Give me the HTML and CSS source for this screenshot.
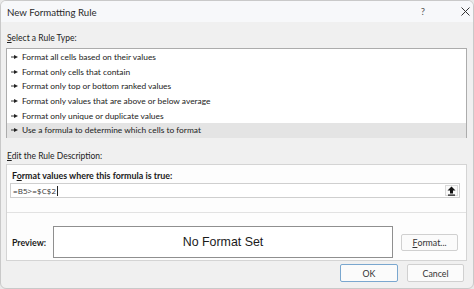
FILE: index.html
```html
<!DOCTYPE html>
<html>
<head>
<meta charset="utf-8">
<link rel="stylesheet" href="styles.css">
</head>
<body>
<div class="window">
  <div class="titlebar">
    <span class="title">New Formatting Rule</span>
    <span class="help">?</span>
    <span class="close">
      <svg width="9" height="9" viewBox="0 0 9 9"><path d="M0.5 0.5L8.5 8.5M8.5 0.5L0.5 8.5" stroke="#333" stroke-width="1" fill="none"/></svg>
    </span>
  </div>
  <div class="body">
    <div class="label"><u>S</u>elect a Rule Type:</div>
    <ul class="list">
      <li><svg class="arr" width="7" height="4" viewBox="0 0 7 4"><path d="M0 2H3.5" stroke="#222" stroke-width="0.9"/><path d="M3 0L7 2L3 4Z" fill="#222"/></svg>Format all cells based on their values</li>
      <li><svg class="arr" width="7" height="4" viewBox="0 0 7 4"><path d="M0 2H3.5" stroke="#222" stroke-width="0.9"/><path d="M3 0L7 2L3 4Z" fill="#222"/></svg>Format only cells that contain</li>
      <li><svg class="arr" width="7" height="4" viewBox="0 0 7 4"><path d="M0 2H3.5" stroke="#222" stroke-width="0.9"/><path d="M3 0L7 2L3 4Z" fill="#222"/></svg>Format only top or bottom ranked values</li>
      <li><svg class="arr" width="7" height="4" viewBox="0 0 7 4"><path d="M0 2H3.5" stroke="#222" stroke-width="0.9"/><path d="M3 0L7 2L3 4Z" fill="#222"/></svg>Format only values that are above or below average</li>
      <li><svg class="arr" width="7" height="4" viewBox="0 0 7 4"><path d="M0 2H3.5" stroke="#222" stroke-width="0.9"/><path d="M3 0L7 2L3 4Z" fill="#222"/></svg>Format only unique or duplicate values</li>
      <li class="selected"><svg class="arr" width="7" height="4" viewBox="0 0 7 4"><path d="M0 2H3.5" stroke="#222" stroke-width="0.9"/><path d="M3 0L7 2L3 4Z" fill="#222"/></svg>Use a formula to determine which cells to format</li>
    </ul>
    <div class="label label-edit"><u>E</u>dit the Rule Description:</div>
    <div class="desc">
      <div class="desc-title">F<u>o</u>rmat values where this formula is true:</div>
      <div class="formula">
        <span class="ftext">=B5&gt;=$C$2</span><span class="caret"></span>
        <span class="collapse">
          <svg width="9" height="10" viewBox="0 0 9 10"><path d="M4.5 0.5L8.5 4.5H6V7.5H3V4.5H0.5Z" fill="#111"/><rect x="1" y="8.5" width="7" height="1.2" fill="#111"/></svg>
        </span>
      </div>
      <div class="sep"></div>
      <div class="preview-row">
        <span class="preview-label">Preview:</span>
        <div class="preview-box">No Format Set</div>
        <span class="btn btn-format"><u>F</u>ormat...</span>
      </div>
    </div>
    <div class="footer">
      <span class="btn btn-ok">OK</span>
      <span class="btn btn-cancel">Cancel</span>
    </div>
  </div>
</div>
</body>
</html>
```

FILE: styles.css
```css
html, body {
  margin: 0;
  padding: 0;
  width: 474px;
  height: 289px;
  overflow: hidden;
  background: #e9e9e9;
}

.window {
  width: 474px;
  height: 289px;
  box-sizing: border-box;
  border: 1px solid #c9c9c9;
  border-radius: 6px;
  overflow: hidden;
  background: #f0f0f0;
  font-family: Lato, "Open Sans", sans-serif;
  color: #1e1e1e;
  display: flex;
  flex-direction: column;
}

.titlebar {
  height: 21px;
  flex: none;
  display: flex;
  align-items: center;
  background: #f7f8fa;
  padding: 0 0 0 6px;
}

.title {
  font-size: 9.7px;
  color: #2a2a2a;
  flex: 1;
  padding-top: 1px;
}

.help {
  font-size: 9.5px;
  color: #555;
  width: 10px;
  text-align: center;
  margin-right: 33px;
}

.close {
  display: flex;
  width: 9px;
  margin-right: 3px;
}

.body {
  flex: 1;
  display: flex;
  flex-direction: column;
  padding: 10px 6px 0 5px;
}

.label {
  font-size: 8.5px;
  line-height: 12px;
  height: 12px;
  padding-left: 1px;
  color: #222;
}

.list {
  list-style: none;
  margin: 4px 0 0 0;
  padding: 1px 0 0 0;
  height: 90px;
  box-sizing: border-box;
  border: 1px solid #acacac;
  background: #ffffff;
}

.list li {
  height: 14.6px;
  display: flex;
  align-items: center;
  font-size: 8.4px;
  padding-left: 4px;
  color: #222;
  white-space: nowrap;
}

.list li.selected {
  background: #e4e4e4;
}

.arr {
  margin-right: 4px;
  flex: none;
}

.label-edit {
  margin-top: 12px;
}

.desc {
  margin-top: 2px;
  height: 97px;
  box-sizing: border-box;
  border: 1px solid #d4d4d4;
  background: #fdfdfd;
  padding: 5px 6px 0 3px;
  display: flex;
  flex-direction: column;
}

.desc-title {
  font-size: 8.9px;
  font-weight: 700;
  line-height: 12px;
  padding-left: 2px;
  color: #1a1a1a;
}

.formula {
  margin-top: 1px;
  height: 15px;
  box-sizing: border-box;
  border: 1px solid #cfcfcf;
  background: #fff;
  display: flex;
  align-items: center;
  padding-left: 2px;
  font-family: "Open Sans", sans-serif;
  font-size: 8px;
  color: #333;
}

.ftext {
  letter-spacing: 0.1px;
}

.caret {
  width: 1px;
  height: 10px;
  background: #222;
  margin-left: 1px;
}

.collapse {
  margin-left: auto;
  margin-right: 1px;
  width: 13px;
  height: 11px;
  box-sizing: border-box;
  border: 1px solid #dadada;
  background: #f9f9f9;
  display: flex;
  align-items: center;
  justify-content: center;
}

.sep {
  margin: 14px -6px 0 -3px;
  height: 1px;
  background: #e2e2e2;
}

.preview-row {
  display: flex;
  align-items: center;
  margin-top: 13px;
}

.preview-label {
  font-size: 8.8px;
  font-weight: 700;
  width: 41px;
  padding-left: 2px;
  color: #1a1a1a;
}

.preview-box {
  width: 340px;
  height: 32px;
  box-sizing: border-box;
  border: 1px solid #8f8f8f;
  background: #fff;
  display: flex;
  align-items: center;
  justify-content: center;
  font-family: "Liberation Sans", Arial, sans-serif;
  font-size: 12.4px;
  color: #1a1a1a;
}

.btn {
  display: flex;
  align-items: center;
  justify-content: center;
  box-sizing: border-box;
  border: 1px solid #d0d0d0;
  background: #fbfbfb;
  border-radius: 2px;
  font-size: 8.8px;
  color: #333;
}

.btn-format {
  margin-left: 8px;
  width: 57px;
  height: 17px;
}

.footer {
  display: flex;
  justify-content: flex-end;
  gap: 9px;
  margin-top: 3px;
  padding-right: 3px;
}

.btn-ok {
  width: 58px;
  height: 18px;
  border-color: #7aa7cf;
}

.btn-cancel {
  width: 57px;
  height: 18px;
}
```
